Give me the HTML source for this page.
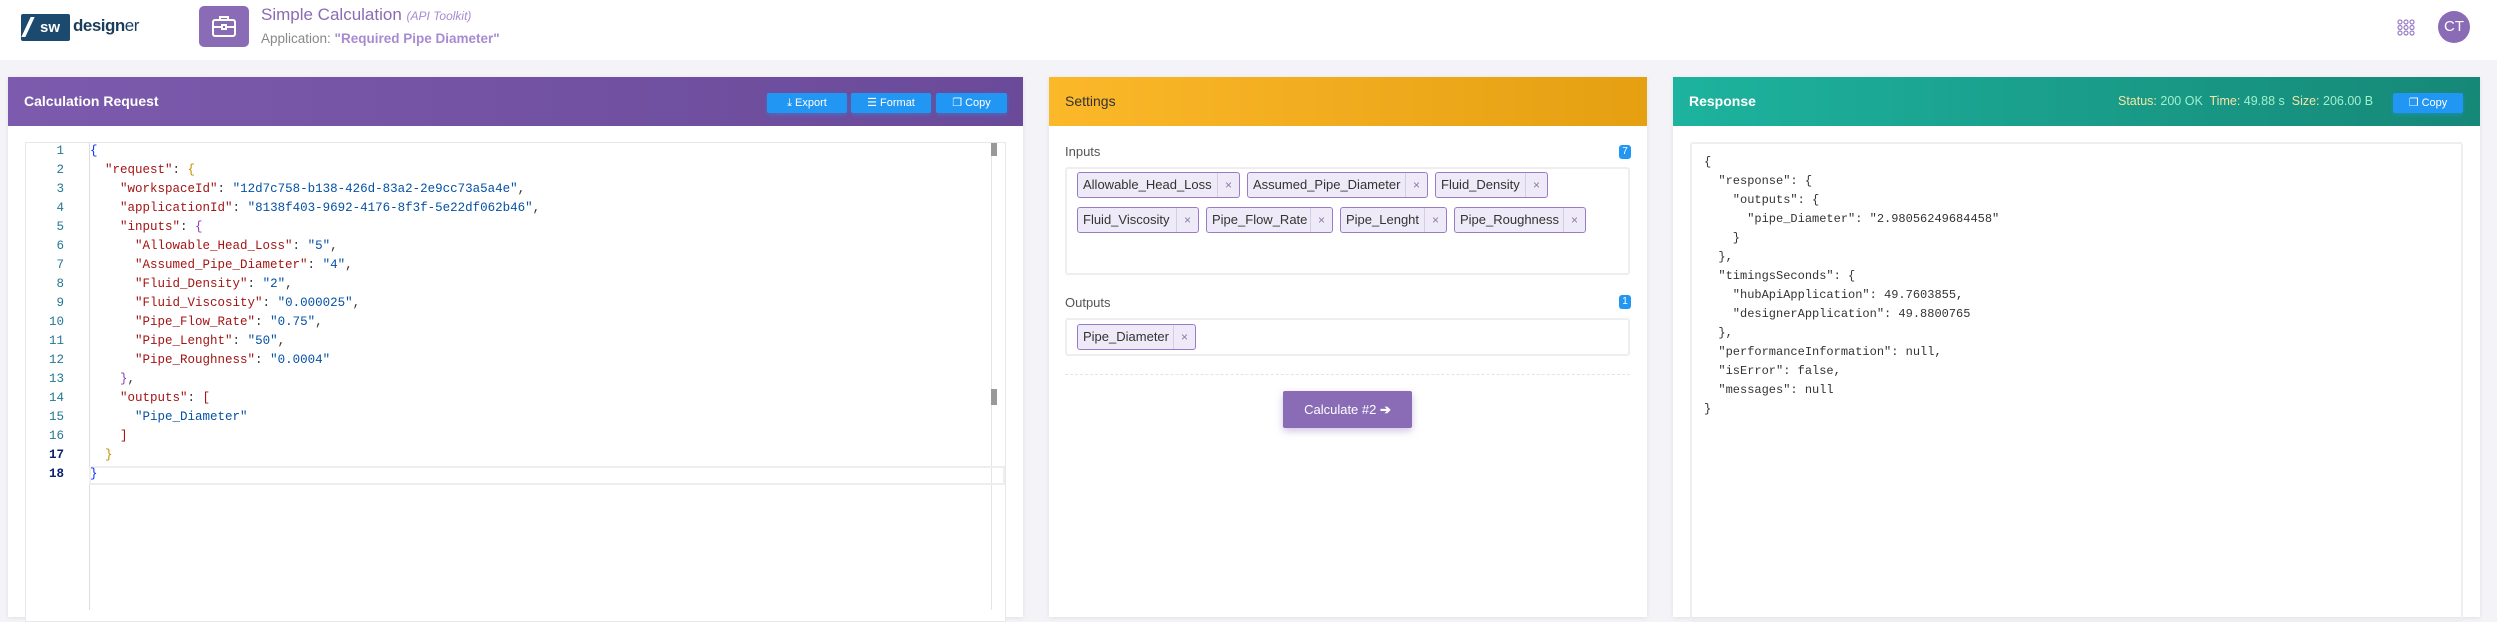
<!DOCTYPE html>
<html><head><meta charset="utf-8"><style>
*{margin:0;padding:0;box-sizing:border-box}
body{width:2497px;height:610px;background:#f4f3f8;font-family:"Liberation Sans",sans-serif;position:relative;overflow:hidden}
.abs{position:absolute}
.hdr{left:0;top:0;width:2497px;height:60px;background:#fff}
.panel{background:#fff;box-shadow:0 1px 4px rgba(0,0,0,.08)}
.ph{position:absolute;left:0;top:0;right:0;height:49px;color:#fff;font-weight:bold;font-size:14px;padding:0 0 0 16px;line-height:49px}
.btn{position:absolute;top:93px;height:20px;background:#2196f3;color:#fff;font-size:11px;line-height:20px;text-align:center;border-radius:2px;box-shadow:0 2px 4px rgba(33,150,243,.4)}
.code{font-family:"Liberation Mono",monospace;white-space:pre;line-height:19px}
.k{color:#a31515}.s{color:#0451a5}.b1{color:#0431fa}.b2{color:#c09000}.b3{color:#8b3fb8}
.tag{position:absolute;height:26px;border:1px solid #9a7cc6;background:#efeaf7;border-radius:3px;font-size:13px;color:#333;line-height:24px;padding-left:5px}
.tag i{position:absolute;right:0;top:0;bottom:0;width:22px;border-left:1px solid #d5cce6;font-style:normal;color:#8a7aa8;text-align:center;font-size:12px}
.badge{position:absolute;width:12px;height:14px;background:#2196f3;color:#fff;font-size:10px;line-height:14px;text-align:center;border-radius:3px}
</style></head><body>
<div class="abs hdr"></div>
<div class="abs" style="left:21px;top:14px;width:49px;height:27px;background:#1b4a6e;border-radius:2px;color:#fff;font-weight:bold;font-size:15px;line-height:27px;padding-left:19px">sw</div>
<div class="abs" style="left:26px;top:17px;width:4px;height:20px;background:#fff;transform:skewX(-25deg)"></div>
<div class="abs" style="left:73px;top:16px;font-size:17px;font-weight:bold;color:#1b3d5c;letter-spacing:-0.5px">design<span style="font-weight:normal">er</span></div>
<div class="abs" style="left:199px;top:6px;width:50px;height:41px;background:#8a6bb5;border-radius:5px"></div>
<svg class="abs" style="left:211px;top:14px" width="26" height="24" viewBox="0 0 26 24" fill="none" stroke="#fff" stroke-width="2"><rect x="2" y="6" width="22" height="16" rx="2"/><path d="M9 6V3h8v3M2 13h22"/><rect x="11" y="11" width="4" height="4" fill="#8a6bb5"/></svg>
<div class="abs" style="left:261px;top:5px;font-size:17px;color:#8a6bb5">Simple Calculation <i style="font-size:12px;color:#a78bd0">(API Toolkit)</i></div>
<div class="abs" style="left:261px;top:31px;font-size:13.5px;color:#888">Application: <b style="color:#a78bd0">"Required Pipe Diameter"</b></div>
<svg class="abs" style="left:2397px;top:19px" width="18" height="17" viewBox="0 0 18 17" fill="none" stroke="#9a7cc6" stroke-width="1.2"><circle cx="3" cy="3" r="2"/><circle cx="9" cy="3" r="2"/><circle cx="15" cy="3" r="2"/><circle cx="3" cy="8.5" r="2"/><circle cx="9" cy="8.5" r="2"/><circle cx="15" cy="8.5" r="2"/><circle cx="3" cy="14" r="2"/><circle cx="9" cy="14" r="2"/><circle cx="15" cy="14" r="2"/></svg>
<div class="abs" style="left:2438px;top:11px;width:32px;height:32px;border-radius:50%;background:#8a6bb5;color:#fff;font-size:15px;line-height:32px;text-align:center">CT</div>

<!-- panel 1 -->
<div class="abs panel" style="left:8px;top:77px;width:1015px;height:540px">
<div class="ph" style="background:linear-gradient(90deg,#7c5aad,#6a4a99)">Calculation Request</div>
</div>
<div class="btn" style="left:767px;width:80px">⤓ Export</div>
<div class="btn" style="left:851px;width:80px">☰ Format</div>
<div class="btn" style="left:936px;width:71px">❐ Copy</div>
<div class="abs" style="left:25px;top:142px;width:981px;height:480px;border:1px solid #e8e8e8;background:#fff"></div>
<div class="abs" style="left:89px;top:143px;width:1px;height:467px;background:#ddd"></div>
<div class="abs" style="left:991px;top:143px;width:1px;height:467px;background:#e4e4e4"></div>
<div class="abs" style="left:991px;top:143px;width:6px;height:13px;background:#999"></div>
<div class="abs" style="left:991px;top:389px;width:6px;height:16px;background:#999"></div>
<div class="abs" style="left:89px;top:466px;width:916px;height:19px;border:2px solid #eee"></div>
<div class="abs code" style="left:26px;top:142px;width:38px;text-align:right;font-size:12.5px;color:#237893">1
2
3
4
5
6
7
8
9
10
11
12
13
14
15
16
<b style="color:#0b216f">17</b>
<b style="color:#0b216f">18</b></div>
<div class="abs code" style="left:90px;top:142px;font-size:12.5px;color:#333"><span class="b1">{</span>
  <span class="k">"request"</span>: <span class="b2">{</span>
    <span class="k">"workspaceId"</span>: <span class="s">"12d7c758-b138-426d-83a2-2e9cc73a5a4e"</span>,
    <span class="k">"applicationId"</span>: <span class="s">"8138f403-9692-4176-8f3f-5e22df062b46"</span>,
    <span class="k">"inputs"</span>: <span class="b3">{</span>
      <span class="k">"Allowable_Head_Loss"</span>: <span class="s">"5"</span>,
      <span class="k">"Assumed_Pipe_Diameter"</span>: <span class="s">"4"</span>,
      <span class="k">"Fluid_Density"</span>: <span class="s">"2"</span>,
      <span class="k">"Fluid_Viscosity"</span>: <span class="s">"0.000025"</span>,
      <span class="k">"Pipe_Flow_Rate"</span>: <span class="s">"0.75"</span>,
      <span class="k">"Pipe_Lenght"</span>: <span class="s">"50"</span>,
      <span class="k">"Pipe_Roughness"</span>: <span class="s">"0.0004"</span>
    <span class="b3">}</span>,
    <span class="k">"outputs"</span>: <span class="k">[</span>
      <span class="s">"Pipe_Diameter"</span>
    <span class="k">]</span>
  <span class="b2">}</span>
<span class="b1">}</span></div>

<!-- panel 2 -->
<div class="abs panel" style="left:1049px;top:77px;width:598px;height:540px">
<div class="ph" style="background:linear-gradient(90deg,#fbb829,#e5a012);color:#333;font-weight:normal">Settings</div>
</div>
<div class="abs" style="left:1065px;top:144px;font-size:13px;color:#555">Inputs</div>
<div class="badge" style="left:1619px;top:145px">7</div>
<div class="abs" style="left:1065px;top:167px;width:565px;height:108px;border:2px solid #eee;border-radius:3px"></div>
<div class="tag" style="left:1077px;top:172px;width:163px">Allowable_Head_Loss<i>×</i></div>
<div class="tag" style="left:1247px;top:172px;width:181px">Assumed_Pipe_Diameter<i>×</i></div>
<div class="tag" style="left:1435px;top:172px;width:113px">Fluid_Density<i>×</i></div>
<div class="tag" style="left:1077px;top:207px;width:122px">Fluid_Viscosity<i>×</i></div>
<div class="tag" style="left:1206px;top:207px;width:127px">Pipe_Flow_Rate<i>×</i></div>
<div class="tag" style="left:1340px;top:207px;width:107px">Pipe_Lenght<i>×</i></div>
<div class="tag" style="left:1454px;top:207px;width:132px">Pipe_Roughness<i>×</i></div>
<div class="abs" style="left:1065px;top:295px;font-size:13px;color:#555">Outputs</div>
<div class="badge" style="left:1619px;top:295px">1</div>
<div class="abs" style="left:1065px;top:318px;width:565px;height:38px;border:2px solid #eee;border-radius:3px"></div>
<div class="tag" style="left:1077px;top:324px;width:119px">Pipe_Diameter<i>×</i></div>
<div class="abs" style="left:1065px;top:374px;width:565px;border-top:1px dashed #e4e4e4"></div>
<div class="abs" style="left:1283px;top:391px;width:129px;height:37px;background:#8a6bb5;color:#fff;font-size:13px;line-height:37px;text-align:center;border-radius:2px;box-shadow:0 3px 8px rgba(138,107,181,.4)">Calculate #2 <b>➔</b></div>

<!-- panel 3 -->
<div class="abs panel" style="left:1673px;top:77px;width:807px;height:540px">
<div class="ph" style="background:linear-gradient(90deg,#1db39e,#168877)">Response</div>
</div>
<div class="abs" style="left:2118px;top:92px;font-size:12.5px;color:#f2e6a8;line-height:18px">Status: <span style="color:#9ff0cf">200 OK</span>&nbsp; Time: <span style="color:#9ff0cf">49.88 s</span>&nbsp; Size: <span style="color:#9ff0cf">206.00 B</span></div>
<div class="btn" style="left:2393px;width:70px">❐ Copy</div>
<div class="abs" style="left:1690px;top:142px;width:773px;height:480px;border:2px solid #eee;border-radius:3px"></div>
<div class="abs code" style="left:1704px;top:153px;font-size:12px;color:#333">{
  "response": {
    "outputs": {
      "pipe_Diameter": "2.98056249684458"
    }
  },
  "timingsSeconds": {
    "hubApiApplication": 49.7603855,
    "designerApplication": 49.8800765
  },
  "performanceInformation": null,
  "isError": false,
  "messages": null
}</div>
</body></html>
